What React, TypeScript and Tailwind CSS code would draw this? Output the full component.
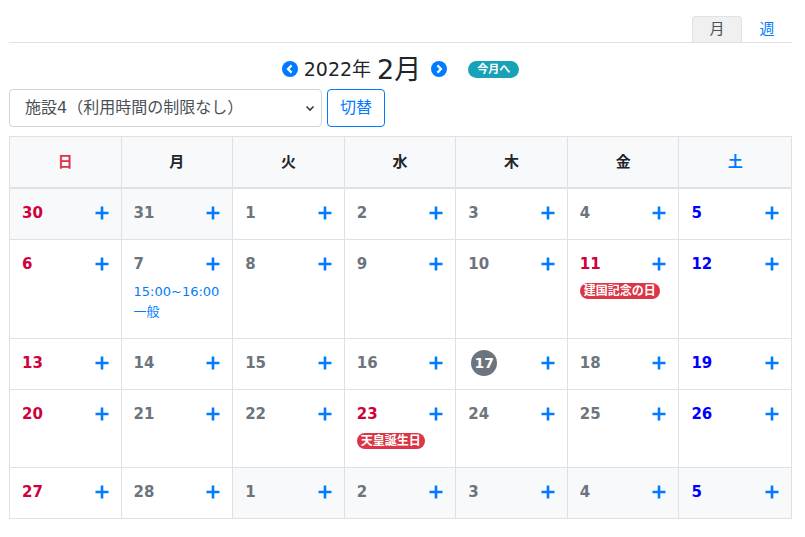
import React from 'react';

type Cell = {
  day: number;
  other?: boolean;
  today?: boolean;
  holiday?: string;
  events?: string[];
};

const weeks: Cell[][] = [
  [{ day: 30, other: true }, { day: 31, other: true }, { day: 1 }, { day: 2 }, { day: 3 }, { day: 4 }, { day: 5 }],
  [{ day: 6 }, { day: 7, events: ['15:00~16:00', '一般'] }, { day: 8 }, { day: 9 }, { day: 10 }, { day: 11, holiday: '建国記念の日' }, { day: 12 }],
  [{ day: 13 }, { day: 14 }, { day: 15 }, { day: 16 }, { day: 17, today: true }, { day: 18 }, { day: 19 }],
  [{ day: 20 }, { day: 21 }, { day: 22 }, { day: 23, holiday: '天皇誕生日' }, { day: 24 }, { day: 25 }, { day: 26 }],
  [{ day: 27 }, { day: 28 }, { day: 1, other: true }, { day: 2, other: true }, { day: 3, other: true }, { day: 4, other: true }, { day: 5, other: true }],
];

const dows = ['日', '月', '火', '水', '木', '金', '土'];

function Plus() {
  return (
    <svg width="14" height="14" viewBox="0 0 14 14" className="shrink-0">
      <path d="M7 0.5v13M0.5 7h13" stroke="#007bff" strokeWidth="2.6" />
    </svg>
  );
}

function Chevron({ dir }: { dir: 'left' | 'right' }) {
  return (
    <svg width="16" height="16" viewBox="0 0 16 16">
      <circle cx="8" cy="8" r="8" fill="#007bff" />
      {dir === 'left' ? (
        <path d="M9.6 4.4L6 8l3.6 3.6" stroke="#fff" strokeWidth="2.2" fill="none" />
      ) : (
        <path d="M6.4 4.4L10 8l-3.6 3.6" stroke="#fff" strokeWidth="2.2" fill="none" />
      )}
    </svg>
  );
}

function DayCell({ cell, col }: { cell: Cell; col: number }) {
  const color =
    col === 0 || cell.holiday ? 'text-[#d0003a]' : col === 6 ? 'text-[#0000ff]' : 'text-[#6c757d]';
  return (
    <div className={`border-r border-[#dee2e6] last:border-r-0 px-3 pt-[12px] pb-[14px] ${cell.other ? 'bg-[#f8f9fa]' : 'bg-white'}`}>
      <div className="flex items-center justify-between h-[24px]">
        {cell.today ? (
          <span className="w-[26px] h-[26px] ml-[3px] rounded-full bg-[#6c757d] text-white text-[14px] font-bold flex items-center justify-center">
            {cell.day}
          </span>
        ) : (
          <span className={`text-[15px] font-bold ${color}`}>{cell.day}</span>
        )}
        <Plus />
      </div>
      {cell.events && (
        <div className="mt-[6px] mb-[2px] text-[13px] leading-[20px] text-[#007bff]">
          {cell.events.map((e) => (
            <div key={e}>{e}</div>
          ))}
        </div>
      )}
      {cell.holiday && (
        <div className="mt-[7px] mb-[4px] flex">
          <span className="rounded-full bg-[#dc3545] text-white text-[12px] font-bold leading-[16px] px-[4px]">
            {cell.holiday}
          </span>
        </div>
      )}
    </div>
  );
}

export default function App() {
  return (
    <div className="w-[805px] h-[537px] bg-white pl-[9px] pr-[13px] pt-[16px] font-['DejaVu_Sans','Noto_Sans_CJK_JP',sans-serif] text-[#212529]">
      {/* tabs */}
      <div className="flex justify-end border-b border-[#dee2e6]">
        <div className="w-[50px] h-[26px] flex items-center justify-center bg-[#f0f0f0] border border-b-0 border-[#dee2e6] rounded-t-[4px] text-[15px] text-[#495057] -mb-px">
          月
        </div>
        <div className="w-[50px] h-[26px] flex items-center justify-center text-[15px] text-[#007bff]">週</div>
      </div>

      {/* title */}
      <div className="flex items-center justify-center mt-[8px] h-[36px]">
        <Chevron dir="left" />
        <span className="ml-[6px] text-[19px]">2022年</span>
        <span className="ml-[6px] text-[27px] leading-none">2月</span>
        <span className="ml-[10px] flex"><Chevron dir="right" /></span>
        <span className="ml-[21px] rounded-full bg-[#17a2b8] text-white text-[11px] font-bold leading-[17px] px-[9px]">今月へ</span>
      </div>

      {/* facility select */}
      <div className="flex items-center gap-[5px] mt-[2px]">
        <div className="w-[313px] h-[38px] border border-[#ced4da] rounded-[4px] flex items-center justify-between pl-[15px] pr-[6px] text-[16px] text-[#495057]">
          <span>施設4（利用時間の制限なし）</span>
          <svg width="10" height="10" viewBox="0 0 10 10">
            <path d="M1.5 3.5L5 7l3.5-3.5" stroke="#343a40" strokeWidth="1.6" fill="none" />
          </svg>
        </div>
        <div className="w-[58px] h-[38px] border border-[#007bff] rounded-[4px] flex items-center justify-center text-[16px] text-[#007bff]">
          切替
        </div>
      </div>

      {/* calendar */}
      <div className="mt-[9px] border border-[#dee2e6] w-[783px]">
        <div className="grid grid-cols-7 border-b-2 border-[#dee2e6] bg-[#f8f9fa]">
          {dows.map((d, i) => (
            <div
              key={d}
              className={`h-[50px] flex items-center justify-center border-r border-[#dee2e6] last:border-r-0 text-[15px] font-bold ${
                i === 0 ? 'text-[#dc3545]' : i === 6 ? 'text-[#007bff]' : 'text-[#212529]'
              }`}
            >
              {d}
            </div>
          ))}
        </div>
        {weeks.map((w, wi) => (
          <div key={wi} className="grid grid-cols-7 border-b border-[#dee2e6] last:border-b-0">
            {w.map((c, ci) => (
              <DayCell key={ci} cell={c} col={ci} />
            ))}
          </div>
        ))}
      </div>
    </div>
  );
}
